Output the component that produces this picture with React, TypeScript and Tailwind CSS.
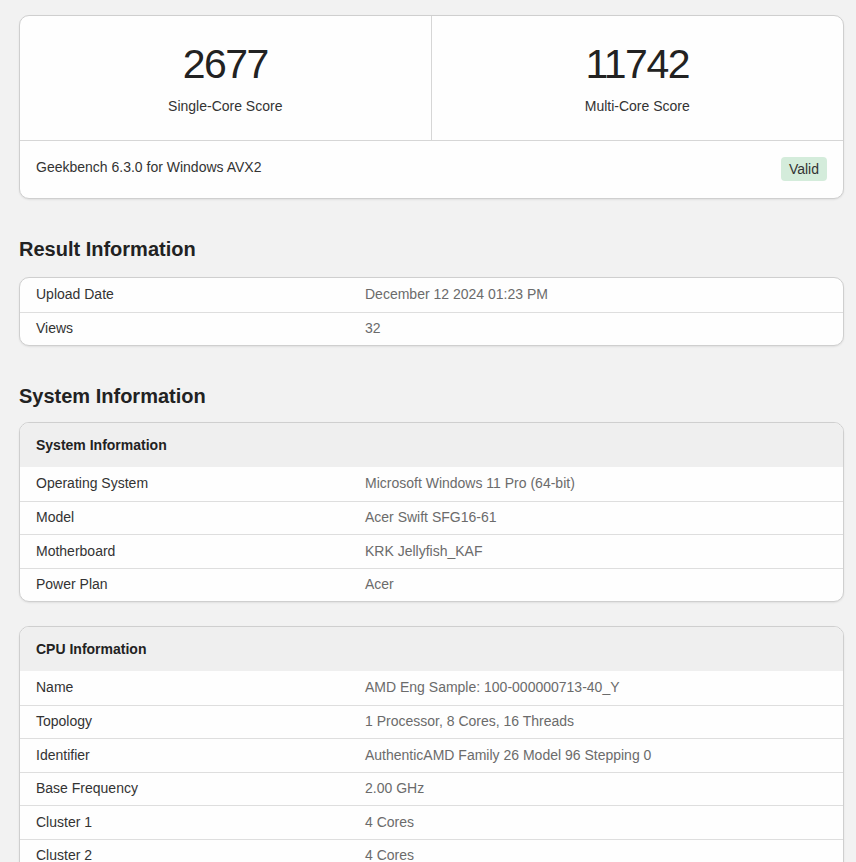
import React from "react";

type Row = { label: string; value: string };

const resultRows: Row[] = [
  { label: "Upload Date", value: "December 12 2024 01:23 PM" },
  { label: "Views", value: "32" },
];

const systemRows: Row[] = [
  { label: "Operating System", value: "Microsoft Windows 11 Pro (64-bit)" },
  { label: "Model", value: "Acer Swift SFG16-61" },
  { label: "Motherboard", value: "KRK Jellyfish_KAF" },
  { label: "Power Plan", value: "Acer" },
];

const cpuRows: Row[] = [
  { label: "Name", value: "AMD Eng Sample: 100-000000713-40_Y" },
  { label: "Topology", value: "1 Processor, 8 Cores, 16 Threads" },
  { label: "Identifier", value: "AuthenticAMD Family 26 Model 96 Stepping 0" },
  { label: "Base Frequency", value: "2.00 GHz" },
  { label: "Cluster 1", value: "4 Cores" },
  { label: "Cluster 2", value: "4 Cores" },
];

const InfoTable = ({ title, rows }: { title?: string; rows: Row[] }) => (
  <div className="bg-[#fefefe] border border-[#cfcfcf] rounded-[10px] overflow-hidden shadow-[0_1px_2px_rgba(0,0,0,0.08)]">
    {title && (
      <div className="bg-[#efefef] px-4 h-[44px] flex items-center text-[14px] font-bold text-[#222]">
        {title}
      </div>
    )}
    {rows.map((row, i) => (
      <div
        key={row.label}
        className={`grid grid-cols-[329px_1fr] px-4 h-[33.5px] items-center text-[14px] ${
          i > 0 ? "border-t border-[#dedede]" : ""
        }`}
      >
        <div className="text-[#333]">{row.label}</div>
        <div className="text-[#6b6b6b]">{row.value}</div>
      </div>
    ))}
  </div>
);

const ScoreCell = ({ score, label, divider }: { score: string; label: string; divider?: boolean }) => (
  <div
    className={`flex flex-col items-center pt-[26px] pb-[24px] ${
      divider ? "border-r border-[#d6d6d6]" : ""
    }`}
  >
    <div className="text-[41px] leading-[44px] tracking-[-1.5px] text-[#222]">{score}</div>
    <div className="mt-[10px] text-[14px] leading-5 text-[#333]">{label}</div>
  </div>
);

export default function App() {
  return (
    <div
      className="min-h-screen bg-[#f2f2f2] pl-[19px] pr-[12px] pt-[15px] pb-10"
      style={{ fontFamily: '"Liberation Sans", Arial, sans-serif' }}
    >
      <div className="bg-[#fefefe] border border-[#cfcfcf] rounded-[10px] shadow-[0_1px_2px_rgba(0,0,0,0.08)]">
        <div className="grid grid-cols-2 border-b border-[#d6d6d6]">
          <ScoreCell score="2677" label="Single-Core Score" divider />
          <ScoreCell score="11742" label="Multi-Core Score" />
        </div>
        <div className="flex justify-between items-start px-4 pt-4 pb-[17px]">
          <div className="text-[14px] leading-5 text-[#333]">Geekbench 6.3.0 for Windows AVX2</div>
          <span className="bg-[#d4ecdb] text-[#333] text-[14px] leading-6 px-2 rounded-[4px]">Valid</span>
        </div>
      </div>

      <h2 className="mt-[38px] mb-4 text-[20px] leading-6 font-bold text-[#222]">Result Information</h2>
      <InfoTable rows={resultRows} />

      <h2 className="mt-[38px] mb-[14px] text-[20px] leading-6 font-bold text-[#222]">System Information</h2>
      <div className="flex flex-col gap-[24px]">
        <InfoTable title="System Information" rows={systemRows} />
        <InfoTable title="CPU Information" rows={cpuRows} />
      </div>
    </div>
  );
}
